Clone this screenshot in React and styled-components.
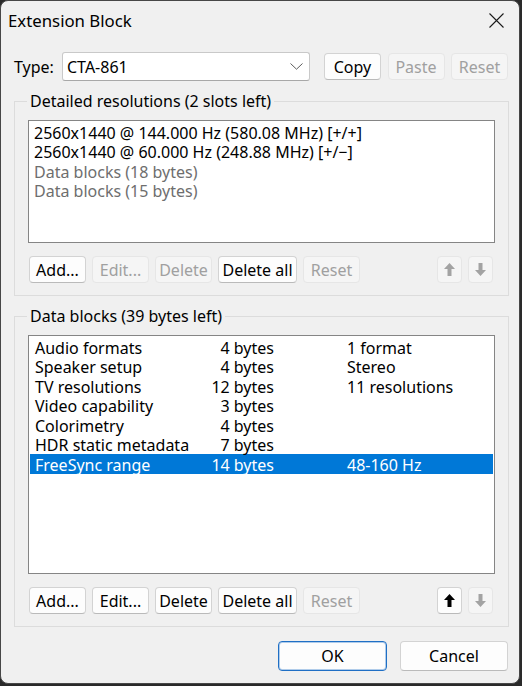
import React from 'react';
import styled, { createGlobalStyle, css } from 'styled-components';

const Global = createGlobalStyle`
  html, body { margin: 0; padding: 0; background: #2a2a2a; }
  body { font-family: "Noto Sans", "Open Sans", sans-serif; -webkit-font-smoothing: antialiased; }
  * { box-sizing: border-box; }
`;

const Window = styled.div`
  width: 520px;
  height: 684px;
  background: #f0f0f0;
  border: 1px solid #474747;
  border-radius: 8px;
  overflow: hidden;
  display: flex;
  flex-direction: column;
  color: #000;
  font-size: 16px;
`;

const TitleBar = styled.div`
  height: 39px;
  flex: none;
  display: flex;
  align-items: center;
  padding: 0 15px 0 7px;
`;

const Title = styled.div`
  flex: 1;
  font-size: 16.8px;
  line-height: 20px;
`;

const CloseIcon = styled.svg`
  display: block;
  width: 15px;
  height: 15px;
`;

const Content = styled.div`
  padding: 0 10px 0 13px;
  display: flex;
  flex-direction: column;
`;

const TypeRow = styled.div`
  margin-top: 12px;
  height: 29px;
  display: flex;
  align-items: center;
`;

const TypeLabel = styled.span`
  width: 48px;
  line-height: 20px;
`;

const Combo = styled.div`
  width: 248px;
  height: 29px;
  background: #fff;
  border: 1px solid #c9c9c9;
  border-bottom-color: #a8a8a8;
  border-radius: 3px;
  display: flex;
  align-items: center;
  padding: 0 6px 0 4px;
  margin-right: 14px;
`;

const ComboText = styled.span`
  flex: 1;
  line-height: 20px;
`;

const Chevron = styled.svg`
  display: block;
  width: 13px;
  height: 7px;
`;

const ButtonGroup = styled.div`
  display: flex;
  gap: ${p => p.$gap || 6}px;
`;

const Button = styled.button`
  width: ${p => p.$w}px;
  height: ${p => p.$h || 27}px;
  padding: 0;
  font: inherit;
  font-size: 16px;
  line-height: 20px;
  border-radius: 4px;
  display: flex;
  align-items: center;
  justify-content: center;
  background: #fdfdfd;
  color: #000;
  border: 1px solid #d3d3d3;
  border-bottom-color: #bababa;
  ${p => p.disabled && css`
    background: #f5f5f5;
    color: #a0a0a0;
    border-color: #e6e6e6;
  `}
  ${p => p.$default && css`
    border: 1px solid #1f6fc5;
    box-shadow: inset 0 0 0 1px rgba(31, 111, 197, 0.35);
  `}
`;

const Group = styled.fieldset`
  margin: 10px 0 0;
  padding: 9px 13px 12px;
  border: 1px solid #dcdcdc;
  min-width: 0;
`;

const Legend = styled.legend`
  padding: 0 3px;
  margin-left: -1px;
  line-height: 20px;
  font-size: 16px;
`;

const List = styled.div`
  height: ${p => p.$h}px;
  background: #fff;
  border: 1px solid #858585;
  padding: 1px;
  overflow: hidden;
`;

const Row = styled.div`
  height: 19.5px;
  padding-top: 2.5px;
  line-height: 17px;
  padding-left: 4px;
  white-space: nowrap;
  color: ${p => (p.$muted ? '#6e6e6e' : '#000')};
`;

const DataRow = styled.div`
  height: 19.5px;
  padding-top: 2.5px;
  line-height: 17px;
  padding-left: 5px;
  display: grid;
  grid-template-columns: 170px 69px 1fr;
  white-space: nowrap;
  background: ${p => (p.$selected ? '#0078d7' : 'transparent')};
  color: ${p => (p.$selected ? '#fff' : '#000')};
`;

const BytesCell = styled.span`
  text-align: right;
`;

const InfoCell = styled.span`
  padding-left: 73px;
`;

const ButtonRow = styled.div`
  margin-top: 13px;
  display: flex;
  gap: 6px;
  padding: 0 2px 0 1px;
`;

const Spacer = styled.div`
  flex: 1;
`;

const ArrowSvg = styled.svg`
  display: block;
  width: 11px;
  height: 13px;
`;

const Footer = styled.div`
  margin-top: 14px;
  display: flex;
  justify-content: flex-end;
  gap: 13px;
  padding-right: 1px;
`;

function Arrow({ dir, disabled }) {
  const d = dir === 'up'
    ? 'M5.5 0 L11 6 L7.5 6 L7.5 13 L3.5 13 L3.5 6 L0 6 Z'
    : 'M5.5 13 L11 7 L7.5 7 L7.5 0 L3.5 0 L3.5 7 L0 7 Z';
  return (
    <ArrowSvg viewBox="0 0 11 13">
      <path d={d} fill={disabled ? '#a3a3a3' : '#000'} />
    </ArrowSvg>
  );
}

function ListButtons({ editEnabled, upEnabled }) {
  return (
    <ButtonRow>
      <Button $w={57}>Add...</Button>
      <Button $w={57} disabled={!editEnabled}>Edit...</Button>
      <Button $w={57} disabled={!editEnabled}>Delete</Button>
      <Button $w={79}>Delete all</Button>
      <Button $w={57} disabled>Reset</Button>
      <Spacer />
      <Button $w={25} disabled={!upEnabled}><Arrow dir="up" disabled={!upEnabled} /></Button>
      <Button $w={25} disabled><Arrow dir="down" disabled /></Button>
    </ButtonRow>
  );
}

const resolutions = [
  { text: '2560x1440 @ 144.000 Hz (580.08 MHz) [+/+]' },
  { text: '2560x1440 @ 60.000 Hz (248.88 MHz) [+/\u2212]' },
  { text: 'Data blocks (18 bytes)', muted: true },
  { text: 'Data blocks (15 bytes)', muted: true },
];

const blocks = [
  ['Audio formats', '4 bytes', '1 format'],
  ['Speaker setup', '4 bytes', 'Stereo'],
  ['TV resolutions', '12 bytes', '11 resolutions'],
  ['Video capability', '3 bytes', ''],
  ['Colorimetry', '4 bytes', ''],
  ['HDR static metadata', '7 bytes', ''],
  ['FreeSync range', '14 bytes', '48-160 Hz'],
];

export default function App() {
  return (
    <>
      <Global />
      <Window>
        <TitleBar>
          <Title>Extension Block</Title>
          <CloseIcon viewBox="0 0 15 15">
            <path d="M0.5 0.5 L14.5 14.5 M14.5 0.5 L0.5 14.5" stroke="#1b1b1b" strokeWidth="1.1" fill="none" />
          </CloseIcon>
        </TitleBar>
        <Content>
          <TypeRow>
            <TypeLabel>Type:</TypeLabel>
            <Combo>
              <ComboText>CTA-861</ComboText>
              <Chevron viewBox="0 0 13 7">
                <path d="M0.5 0.5 L6.5 6.2 L12.5 0.5" stroke="#5c5c5c" strokeWidth="1" fill="none" />
              </Chevron>
            </Combo>
            <ButtonGroup $gap={6.5}>
              <Button $w={57}>Copy</Button>
              <Button $w={57} disabled>Paste</Button>
              <Button $w={57} disabled>Reset</Button>
            </ButtonGroup>
          </TypeRow>

          <Group>
            <Legend>Detailed resolutions (2 slots left)</Legend>
            <List $h={123}>
              {resolutions.map(r => (
                <Row key={r.text} $muted={r.muted}>{r.text}</Row>
              ))}
            </List>
            <ListButtons editEnabled={false} upEnabled={false} />
          </Group>

          <Group>
            <Legend>Data blocks (39 bytes left)</Legend>
            <List $h={239}>
              {blocks.map(([name, bytes, info], i) => (
                <DataRow key={name} $selected={i === blocks.length - 1}>
                  <span>{name}</span>
                  <BytesCell>{bytes}</BytesCell>
                  <InfoCell>{info}</InfoCell>
                </DataRow>
              ))}
            </List>
            <ListButtons editEnabled upEnabled />
          </Group>

          <Footer>
            <Button $w={109} $h={30} $default>OK</Button>
            <Button $w={108} $h={30}>Cancel</Button>
          </Footer>
        </Content>
      </Window>
    </>
  );
}
